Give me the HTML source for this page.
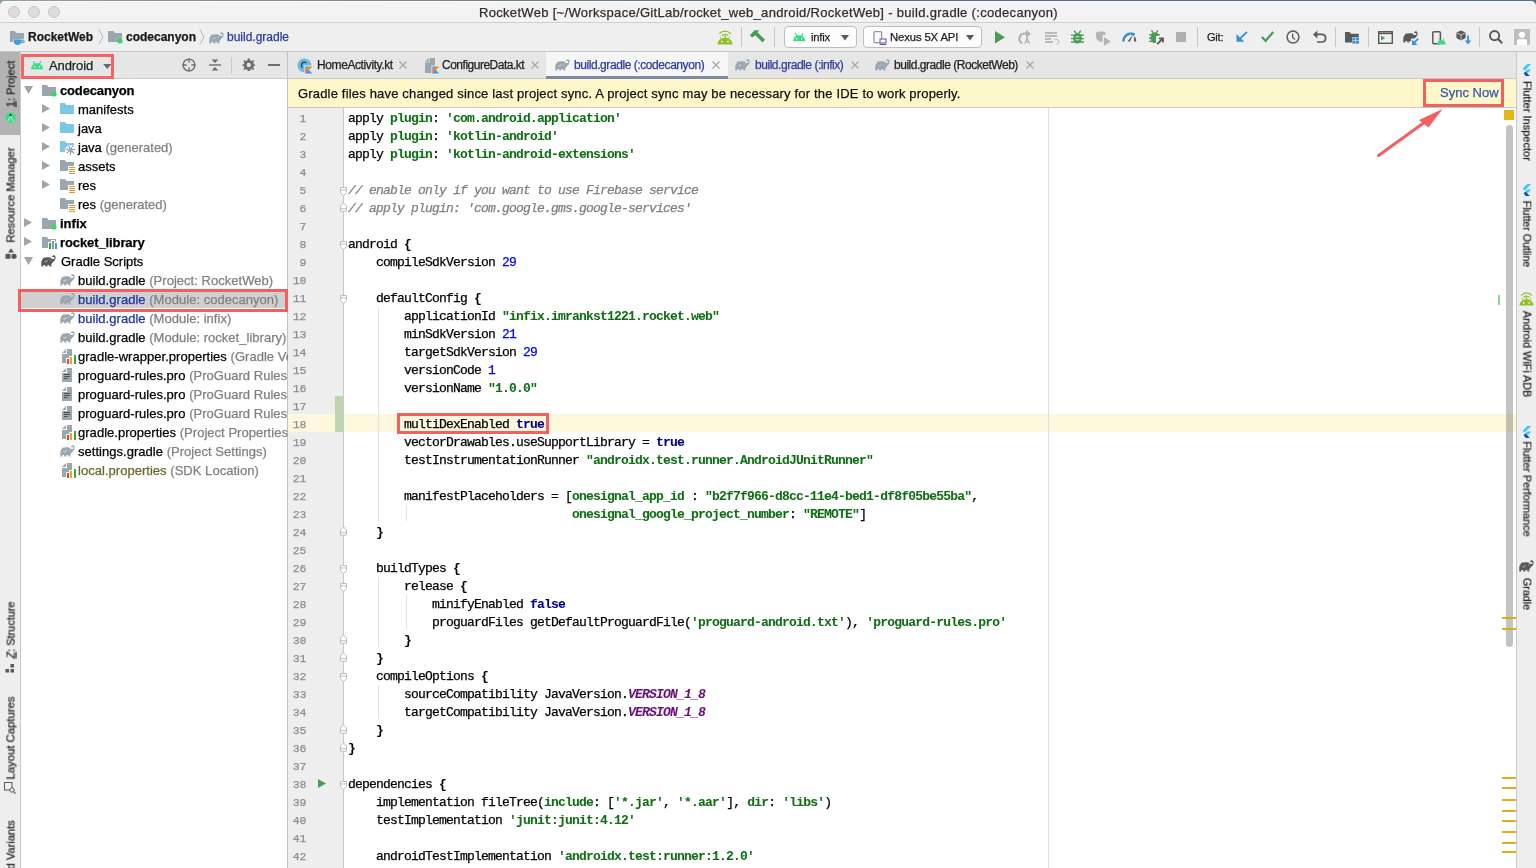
<!DOCTYPE html>
<html><head><meta charset="utf-8">
<style>
*{margin:0;padding:0;box-sizing:border-box}
html,body{width:1536px;height:868px;overflow:hidden;background:#efefef;font-family:"Liberation Sans",sans-serif;color:#000;position:relative}
.a{position:absolute;display:block}
.t{position:absolute;white-space:pre;line-height:1}
svg.a{overflow:visible}
.code{position:absolute;left:348px;top:110.44px;font-family:"Liberation Mono",monospace;font-size:13px;letter-spacing:-0.8px;line-height:18px;white-space:pre;color:#000}
.ln{position:absolute;left:280px;top:110.04px;width:26.3px;text-align:right;font-family:"Liberation Mono",monospace;font-size:11.5px;letter-spacing:-0.1px;line-height:18px;white-space:pre;color:#8c8c8c}
.code i{font-style:normal}
.code i.s{color:#0f6e14;font-weight:bold}
.code i.k{color:#000080;font-weight:bold}
.code i.n{color:#0000ff}
.code i.c{color:#808080;font-style:italic}
.code i.b{font-weight:bold}
.code i.p{color:#660e7a;font-weight:bold;font-style:italic}
.t,.code,.ln{will-change:transform;-webkit-text-stroke:0.25px currentColor}
.code i.s,.code i.k,.code i.b,.code i.p{-webkit-text-stroke:0.05px currentColor}
</style></head><body>
<div class="a" style="left:0px;top:0px;width:1536px;height:8px;background:linear-gradient(90deg,#8fa0a3,#5d7183 50%,#587090);"></div>
<div class="a" style="left:0;top:1px;width:1536px;height:22px;background:#f3f3f3;border-radius:5px 5px 0 0;border-top:1px solid #fbfbfb"></div>
<div class="a" style="left:0px;top:22px;width:1536px;height:1px;background:#cfcfcf;"></div>
<div class="a" style="left:8px;top:5.5px;width:12px;height:12px;border-radius:50%;background:#dddddd;border:0.6px solid #c9c9c9"></div>
<div class="a" style="left:28px;top:5.5px;width:12px;height:12px;border-radius:50%;background:#dddddd;border:0.6px solid #c9c9c9"></div>
<div class="a" style="left:48px;top:5.5px;width:12px;height:12px;border-radius:50%;background:#dddddd;border:0.6px solid #c9c9c9"></div>
<div class="t" style="left:479.40px;top:6.00px;font-size:13px;color:#2e2e2e;letter-spacing:0.31px;">RocketWeb [~/Workspace/GitLab/rocket_web_android/RocketWeb] - build.gradle (:codecanyon)</div>
<div class="a" style="left:0px;top:23px;width:1536px;height:28px;background:#efefef;"></div>
<div class="a" style="left:0px;top:51px;width:1536px;height:1px;background:#c8c8c8;"></div>
<svg class="a" style="left:10px;top:31px;" width="16" height="15" viewBox="0 0 16 15"><path d="M0 0H4.6L6.4 2H14V8.6H13.2V8.2H3V11H0Z" fill="#9aa7b0"/><path d="M3.8 8.6 H11.2 V10.6 C11 12.6 9.6 14 7.5 14 C5.4 14 4 12.6 3.8 10.6Z" fill="#389fd6"/><ellipse cx="12.6" cy="10.6" rx="1.7" ry="1.1" stroke="#389fd6" stroke-width="1.1" fill="none"/></svg>
<div class="t" style="left:28.30px;top:30.84px;font-size:12px;color:#1a1a1a;font-weight:bold;">RocketWeb</div>
<svg class="a" style="left:98px;top:29px;" width="6" height="16" viewBox="0 0 6 16"><path d="M0.8 0.5L5 8L0.8 15.5" stroke="#b8b8b8" stroke-width="1" fill="none"/></svg>
<svg class="a" style="left:108px;top:31px;" width="14" height="11" viewBox="0 0 14 11"><path d="M0 0H5.5L7 2H14V11H0Z" fill="#9aa7b0"/></svg>
<svg class="a" style="left:117px;top:38px;" width="6" height="6" viewBox="0 0 6 6"><circle cx="3" cy="3" r="2.6" fill="#3dd65f"/></svg>
<div class="t" style="left:126.00px;top:30.84px;font-size:12px;color:#1a1a1a;font-weight:bold;">codecanyon</div>
<svg class="a" style="left:199px;top:29px;" width="6" height="16" viewBox="0 0 6 16"><path d="M0.8 0.5L5 8L0.8 15.5" stroke="#b8b8b8" stroke-width="1" fill="none"/></svg>
<svg class="a" style="left:208.5px;top:31.5px;" width="15" height="12" viewBox="0 0 15 12"><path d="M0.3 11.4 V6.6 L2.4 2.8 C4.5 2.0 7.5 2.0 9.6 2.6 L10.2 3.6 C11.2 4.4 12.8 4.2 13.4 3.2 C13.8 2.5 13.2 1.8 12.4 1.9 C11.8 2 11.4 2.4 11.1 2.0 C10.9 1.4 11.6 0.4 12.6 0.3 C14.0 0.2 14.9 1.4 14.6 3.0 C14.3 4.8 13.2 6.2 11.9 7.2 L10.4 9.0 V11.4 H8.6 L8.2 10.0 C7.4 10.2 7.0 10.2 6.4 10.0 V11.4 H4.4 L4.1 10.0 H2.5 L2.2 11.4 Z" fill="#9aa7b0"/><path d="M3.4 6.4 L4.6 7.0 L6.6 5.6" stroke="#efefef" stroke-width="0.8" fill="none" opacity="0.8"/><path d="M9.7 4.4 V6" stroke="#efefef" stroke-width="0.6" opacity="0.6"/></svg>
<div class="t" style="left:227.00px;top:30.84px;font-size:12px;color:#283b9c;">build.gradle</div>
<svg class="a" style="left:716px;top:29px;" width="18" height="17" viewBox="0 0 18 17"><path d="M1.5 15.5 C1.8 11.5 4.8 8.8 9 8.8 C13.2 8.8 16.2 11.5 16.5 15.5 Z" fill="#8fc026"/><circle cx="6" cy="12.6" r="0.9" fill="#fff"/><circle cx="12" cy="12.6" r="0.9" fill="#fff"/><path d="M3.3 4.8 C6.5 1.2 11.5 1.2 14.7 4.8" stroke="#8fc026" stroke-width="1.3" fill="none"/><path d="M5.8 6.8 C7.6 5 10.4 5 12.2 6.8" stroke="#8fc026" stroke-width="1.3" fill="none"/><circle cx="9" cy="7.4" r="1" fill="#8fc026"/><path d="M4.3 7.6 L5 9.2 M13.7 7.6 L13 9.2" stroke="#8fc026" stroke-width="1"/></svg>
<div class="a" style="left:741px;top:27px;width:1px;height:20px;background:#c6c6c6;"></div>
<svg class="a" style="left:749px;top:29px;" width="17" height="16" viewBox="0 0 17 16"><path d="M0.8 6.2 L5.6 1.2 L10.2 1.2 L8.6 3.6 L16 10.6 L13.6 13.6 L6.4 6.2 L3.2 8.6 Z" fill="#499c54"/></svg>
<div class="a" style="left:774px;top:27px;width:1px;height:20px;background:#c6c6c6;"></div>
<div class="a" style="left:784px;top:26px;width:73px;height:22px;border:1px solid #bdbdbd;border-radius:4px;background:#fcfcfd"></div>
<div class="a" style="left:863px;top:26px;width:119px;height:22px;border:1px solid #bdbdbd;border-radius:4px;background:#fcfcfd"></div>
<svg class="a" style="left:792.9px;top:32.6px;" width="12.3" height="8.2" viewBox="0 0 12 8.2"><path d="M0 8.2 C0.1 4.9 2.5 2.3 6 2.3 C9.5 2.3 11.9 4.9 12 8.2 Z" fill="#3ddc84"/><path d="M2.5 0.5 L3.5 3 M9.5 0.5 L8.5 3" stroke="#3ddc84" stroke-width="1.2" stroke-linecap="round"/><circle cx="3.6" cy="5.7" r="0.7" fill="#fff"/><circle cx="8.5" cy="5.7" r="0.7" fill="#fff"/></svg>
<div class="t" style="left:811.00px;top:31.83px;font-size:11.3px;color:#1e1e1e;letter-spacing:-0.25px;">infix</div>
<svg class="a" style="left:841px;top:34.5px;" width="8" height="5.5" viewBox="0 0 8 5.5"><path d="M0 0H8L4 5.5Z" fill="#595959"/></svg>
<svg class="a" style="left:873px;top:31px;" width="14" height="14" viewBox="0 0 14 14"><rect x="1" y="0.6" width="7.6" height="11" rx="1" stroke="#8d9aa3" stroke-width="1.3" fill="none"/><rect x="7" y="8" width="6" height="4" fill="#fcfcfd" stroke="#7048a8" stroke-width="1"/><path d="M6.6 13.5H13.2" stroke="#7048a8" stroke-width="1"/></svg>
<div class="t" style="left:890.30px;top:31.83px;font-size:11.3px;color:#1e1e1e;letter-spacing:-0.12px;">Nexus 5X API</div>
<svg class="a" style="left:966px;top:34.5px;" width="8" height="5.5" viewBox="0 0 8 5.5"><path d="M0 0H8L4 5.5Z" fill="#595959"/></svg>
<svg class="a" style="left:994.5px;top:30.5px;" width="10" height="12.5" viewBox="0 0 10 12.5"><path d="M0 0L10 6.2L0 12.5Z" fill="#499c54"/></svg>
<svg class="a" style="left:1018px;top:30px;" width="14" height="14" viewBox="0 0 14 14"><path d="M4.2 13.2 C1.4 12 0.6 8.6 2 6 C3.2 4 5.8 3.2 8.5 3.8" stroke="#b0b0b0" stroke-width="2" fill="none"/><path d="M8 0 L13 4 L8 8 Z" fill="#b0b0b0"/><path d="M7 13.8 L9.2 7.6 L11.4 13.8 M7.8 11.6H10.6" stroke="#b0b0b0" stroke-width="1.1" fill="none"/></svg>
<svg class="a" style="left:1045px;top:31.5px;" width="15" height="13" viewBox="0 0 15 13"><path d="M0 1H12M0 4H12M0 7H6M0 10H8" stroke="#a9a9a9" stroke-width="1.6"/><path d="M9.2 8 C11 6.8 14.2 7.4 14 10 C13.8 12 12 12.4 11 12" stroke="#b8b8b8" stroke-width="1" fill="none"/></svg>
<svg class="a" style="left:1070.5px;top:30px;" width="13" height="14" viewBox="0 0 13 14"><path d="M3.2 0.6 L5 3 M9.8 0.6 L8 3" stroke="#499c54" stroke-width="1.4"/><ellipse cx="6.5" cy="8.2" rx="4.3" ry="5.4" fill="#499c54"/><path d="M0 5.2H13M0 8.6H13M0 12H13" stroke="#499c54" stroke-width="1.3"/><path d="M4.6 6.8H8.4M4.6 9.8H8.4" stroke="#efefef" stroke-width="0.9"/></svg>
<svg class="a" style="left:1096px;top:30.5px;" width="15" height="15" viewBox="0 0 15 15"><path d="M0 1.5 C2.4 0 7.2 0 9.6 1.5 V4 H6.6 V11 C3.6 11.5 0 8.8 0 5.6Z" fill="#b4b4b4"/><path d="M8 6 L15 10.5 L8 15 Z" fill="#b4b4b4"/></svg>
<svg class="a" style="left:1121.5px;top:31.5px;" width="15" height="10" viewBox="0 0 15 10"><path d="M1.4 9.5 C1.4 5 4.6 1.6 8.6 1.6" stroke="#3592d8" stroke-width="2.6" fill="none"/><path d="M8.6 1.6 C10.5 1.6 11.8 2.2 12.6 3" stroke="#3592d8" stroke-width="2.6" fill="none"/><path d="M5.5 9.5 L11 2.5 L8 9.5Z" fill="#5a5a5a"/><path d="M12.2 4 C13.6 5.2 14.2 7.2 14.2 9.5 H12Z" fill="#5a5a5a"/></svg>
<svg class="a" style="left:1149px;top:30px;" width="15" height="15" viewBox="0 0 15 15"><path d="M2.5 0.4 L4.2 2.8 M8.8 0.4 L7.2 2.8" stroke="#499c54" stroke-width="1.4"/><path d="M5.6 2.2 C8.6 2.2 9.8 4.2 9.8 6 H7 V12.8 C6.5 13 6 13 5.6 13 C2.8 13 1.6 10.5 1.6 7.5 C1.6 4.3 3 2.2 5.6 2.2Z" fill="#499c54"/><path d="M0 4.6H11M0 8H7M0 11.4H7" stroke="#499c54" stroke-width="1.3"/><path d="M8.2 14.2 L13.4 9 M10 8.4 H14 V12.4" stroke="#595959" stroke-width="1.8" fill="none"/></svg>
<div class="a" style="left:1176px;top:32px;width:10px;height:10px;background:#b0b0b0;"></div>
<div class="a" style="left:1197px;top:27px;width:1px;height:20px;background:#c6c6c6;"></div>
<div class="t" style="left:1207.30px;top:31.69px;font-size:11px;color:#1e1e1e;letter-spacing:-0.2px;">Git:</div>
<svg class="a" style="left:1236px;top:31px;" width="12" height="11" viewBox="0 0 12 11"><path d="M11 0.8 L2.6 9" stroke="#3592d8" stroke-width="1.8"/><path d="M0.5 3 V10.8 H8.3Z" fill="#3592d8"/></svg>
<svg class="a" style="left:1261px;top:31px;" width="13" height="11" viewBox="0 0 13 11"><path d="M0.8 6 L4.6 9.8 L12.2 1" stroke="#499c54" stroke-width="2.2" fill="none"/></svg>
<svg class="a" style="left:1286px;top:30px;" width="14" height="14" viewBox="0 0 14 14"><circle cx="7" cy="7" r="5.9" stroke="#5a5a5a" stroke-width="1.5" fill="none"/><path d="M6.6 3.6 V7.4 L9 9.4" stroke="#5a5a5a" stroke-width="1.3" fill="none"/></svg>
<svg class="a" style="left:1313px;top:30px;" width="14" height="13" viewBox="0 0 14 13"><path d="M3.6 4.4 H8.6 C11 4.4 12.6 6 12.6 8.2 C12.6 10.4 11 12 8.6 12 H4" stroke="#5a5a5a" stroke-width="1.7" fill="none"/><path d="M0 4.4 L4.4 0.4 V8.4Z" fill="#5a5a5a"/></svg>
<div class="a" style="left:1335px;top:27px;width:1px;height:20px;background:#c6c6c6;"></div>
<svg class="a" style="left:1344.5px;top:32px;" width="15" height="12" viewBox="0 0 15 12"><path d="M0 0H4.6L6 1.8H13.8V5H7.2V10.4H0Z" fill="#595959"/><rect x="7.4" y="5.4" width="3" height="2.8" fill="#3592d8"/><rect x="11" y="5.4" width="3" height="2.8" fill="#3592d8"/><rect x="7.4" y="8.8" width="3" height="2.8" fill="#3592d8"/><rect x="11" y="8.8" width="3" height="2.8" fill="#3592d8"/></svg>
<div class="a" style="left:1368px;top:27px;width:1px;height:20px;background:#c6c6c6;"></div>
<svg class="a" style="left:1377.5px;top:30.5px;" width="15" height="13" viewBox="0 0 15 13"><rect x="0.7" y="0.7" width="13.6" height="11.6" stroke="#595959" stroke-width="1.4" fill="none"/><path d="M0.7 2.4H14.3" stroke="#595959" stroke-width="1.6"/><path d="M3 4.4 L7.2 7 L3 9.6Z" fill="#499c54"/></svg>
<svg class="a" style="left:1403px;top:31px;" width="16" height="14" viewBox="0 0 16 14"><path d="M0.3 11.4 V6.6 L2.4 2.8 C4.5 2.0 7.5 2.0 9.6 2.6 L10.2 3.6 C11.2 4.4 12.8 4.2 13.4 3.2 C13.8 2.5 13.2 1.8 12.4 1.9 C11.8 2 11.4 2.4 11.1 2.0 C10.9 1.4 11.6 0.4 12.6 0.3 C14.0 0.2 14.9 1.4 14.6 3.0 C14.3 4.8 13.2 6.2 11.9 7.2 L10.4 9.0 V11.4 H8.6 L8.2 10.0 C7.4 10.2 7.0 10.2 6.4 10.0 V11.4 H4.4 L4.1 10.0 H2.5 L2.2 11.4 Z" fill="#5a5a5a"/><path d="M8 7.5 H16 V14 H8Z" fill="#efefef"/><path d="M15.2 7.6 L10.6 12.2" stroke="#3592d8" stroke-width="1.8"/><path d="M9 8.6V14H14.4Z" fill="#3592d8"/></svg>
<svg class="a" style="left:1431.5px;top:30.5px;" width="14" height="14" viewBox="0 0 14 14"><rect x="0.8" y="0.8" width="7.6" height="12" rx="1" stroke="#595959" stroke-width="1.5" fill="none"/><path d="M5 13.6 C5.2 10.6 7 8.8 9.4 8.8 C11.8 8.8 13.6 10.6 13.8 13.6Z" fill="#3ddc84"/><path d="M6.6 7.4L7.6 9M12.2 7.4L11.2 9" stroke="#3ddc84" stroke-width="0.9"/></svg>
<svg class="a" style="left:1455.5px;top:30px;" width="16" height="15" viewBox="0 0 16 15"><path d="M5 0.4 L9.6 2.6 V8 L5 10.4 L0.4 8 V2.6Z" fill="#595959"/><path d="M0.6 2.8 L5 5 L9.4 2.8 M5 5V10.2" stroke="#efefef" stroke-width="0.7" fill="none"/><path d="M12 5.6 V13" stroke="#3592d8" stroke-width="1.8"/><path d="M8.8 10.6 H15.2 L12 14.6Z" fill="#3592d8"/></svg>
<div class="a" style="left:1479px;top:27px;width:1px;height:20px;background:#c6c6c6;"></div>
<svg class="a" style="left:1488px;top:29px;" width="16" height="16" viewBox="0 0 16 16"><circle cx="6.6" cy="6.6" r="4.6" stroke="#595959" stroke-width="1.9" fill="none"/><path d="M10 10 L14.2 14.2" stroke="#595959" stroke-width="2.2"/></svg>
<svg class="a" style="left:1514px;top:29px;" width="16" height="16" viewBox="0 0 16 16"><rect width="16" height="16" fill="#bdbdbd"/><circle cx="8" cy="5.8" r="3.1" fill="#fff"/><path d="M3 16 V11.6 C3 10.8 3.6 10.2 4.4 10.2 H11.6 C12.4 10.2 13 10.8 13 11.6 V16Z" fill="#fff"/></svg>
<div class="a" style="left:0px;top:52px;width:20px;height:816px;background:#eeeeee;"></div>
<div class="a" style="left:20px;top:52px;width:1px;height:816px;background:#c9c9c9;"></div>
<div class="a" style="left:0px;top:52px;width:20px;height:83px;background:#b3b3b3;"></div>
<div class="t" style="left:10.7px;top:83.5px;font-size:11.0px;color:#1e1e1e;transform:translate(-50%,-50%) rotate(-90deg);"><u>1</u>: Project</div>
<svg class="a" style="left:5px;top:112px;" width="11" height="11" viewBox="0 0 11 11"><circle cx="5.5" cy="5.5" r="5.2" fill="#3ddc84"/><path d="M5.5 2 L5.5 4.6" stroke="#073042" stroke-width="1.6"/><path d="M2.6 9.6 L5.5 4 L8.4 9.6" stroke="#e8f5ec" stroke-width="0.8" fill="none"/></svg>
<div class="t" style="left:10.7px;top:195.3px;font-size:11.2px;color:#1e1e1e;transform:translate(-50%,-50%) rotate(-90deg);">Resource Manager</div>
<svg class="a" style="left:4.5px;top:247.5px;" width="12" height="12" viewBox="0 0 12 12"><path d="M6 0.3 L9 4.6 H3Z" fill="#595959"/><rect x="0.5" y="5.8" width="5" height="5" fill="#595959"/><circle cx="9" cy="8.3" r="2.6" fill="#595959"/></svg>
<div class="t" style="left:10.7px;top:629.8px;font-size:10.9px;color:#1e1e1e;transform:translate(-50%,-50%) rotate(-90deg);"><u><i>Z</i></u>: Structure</div>
<svg class="a" style="left:5px;top:663px;transform:rotate(-90deg)" width="10" height="10" viewBox="0 0 10 10"><rect x="0.5" y="0.5" width="3.5" height="3.5" fill="#595959"/><rect x="0.5" y="5.5" width="3.5" height="3.5" fill="#595959"/><rect x="5.5" y="5.5" width="3.5" height="3.5" fill="#595959"/></svg>
<div class="t" style="left:10.7px;top:737.5px;font-size:11.3px;color:#1e1e1e;transform:translate(-50%,-50%) rotate(-90deg);">Layout Captures</div>
<svg class="a" style="left:4px;top:782px;transform:rotate(-90deg)" width="12" height="12" viewBox="0 0 12 12"><rect x="4" y="0.5" width="7.5" height="7.5" stroke="#595959" stroke-width="1" fill="none"/><circle cx="4" cy="8" r="2.2" stroke="#595959" stroke-width="1" fill="#eeeeee"/><path d="M2.4 9.6 L0.4 11.6" stroke="#595959" stroke-width="1.1"/></svg>
<div class="t" style="left:10.7px;top:854px;font-size:11.1px;color:#1e1e1e;transform:translate(-50%,-50%) rotate(-90deg);">Build Variants</div>
<div class="a" style="left:21px;top:52px;width:266px;height:26px;background:#e6e6e6;"></div>
<div class="a" style="left:21px;top:78px;width:266px;height:1px;background:#c9c9c9;"></div>
<div class="a" style="left:287px;top:52px;width:1px;height:816px;background:#c2c2c2;"></div>
<svg class="a" style="left:30.9px;top:60.8px;" width="12.1" height="8.2" viewBox="0 0 12 8.2"><path d="M0 8.2 C0.1 4.9 2.5 2.3 6 2.3 C9.5 2.3 11.9 4.9 12 8.2 Z" fill="#3ddc84"/><path d="M2.5 0.5 L3.5 3 M9.5 0.5 L8.5 3" stroke="#3ddc84" stroke-width="1.2" stroke-linecap="round"/><circle cx="3.6" cy="5.7" r="0.7" fill="#fff"/><circle cx="8.5" cy="5.7" r="0.7" fill="#fff"/></svg>
<div class="t" style="left:49.20px;top:59.00px;font-size:13px;color:#1e1e1e;letter-spacing:-0.1px;">Android</div>
<svg class="a" style="left:102.5px;top:63.8px;" width="8.5" height="5" viewBox="0 0 8.5 5"><path d="M0 0H8.5L4.25 5Z" fill="#6a6a6a"/></svg>
<div class="a" style="left:21px;top:54px;width:93px;height:25px;border:3px solid #f46464"></div>
<svg class="a" style="left:182px;top:58px;" width="14" height="14" viewBox="0 0 14 14"><circle cx="7" cy="7" r="5.9" stroke="#6e6e6e" stroke-width="1.4" fill="none"/><path d="M7 0.4V4.6M7 9.4V13.6M0.4 7H4.6M9.4 7H13.6" stroke="#6e6e6e" stroke-width="1.4"/></svg>
<svg class="a" style="left:209px;top:59px;" width="12" height="12" viewBox="0 0 12 12"><path d="M0 6H12" stroke="#6e6e6e" stroke-width="1.4"/><path d="M2.5 0.5H9.5L6 4Z M2.5 11.5H9.5L6 8Z" fill="#6e6e6e"/></svg>
<div class="a" style="left:231px;top:57px;width:1px;height:17px;background:#c9c9c9;"></div>
<svg class="a" style="left:241.5px;top:57.8px;" width="13" height="13" viewBox="0 0 13 13"><path d="M6.5 0.6 L7.8 0.6 L8.2 2.4 L9.8 3.1 L11.3 2.1 L12.2 3 L11.2 4.6 L11.9 6.2 L13 6.5 V7.8 L11.9 8.1 L11.2 9.7 L12.2 11.2 L11.3 12.1 L9.8 11.1 L8.2 11.8 L7.8 13 H5.8 L5.4 11.8 L3.8 11.1 L2.3 12.1 L1.4 11.2 L2.4 9.7 L1.7 8.1 L0.4 7.8 V6.5 L1.7 6.2 L2.4 4.6 L1.4 3 L2.3 2.1 L3.8 3.1 L5.4 2.4 L5.8 0.6Z" fill="#6e6e6e"/><circle cx="6.8" cy="6.9" r="2.2" fill="#e6e6e6"/></svg>
<div class="a" style="left:268px;top:64px;width:12px;height:1.6px;background:#6e6e6e;"></div>
<div class="a" style="left:21px;top:79px;width:266px;height:789px;background:#ffffff;"></div>
<svg class="a" style="left:24px;top:85.5px;" width="9" height="8" viewBox="0 0 9 8"><path d="M0 0H9L4.5 8Z" fill="#a3a3a3"/></svg>
<svg class="a" style="left:42px;top:85.0px;" width="14" height="11" viewBox="0 0 14 11"><path d="M0 0H4.8L6.6 2H14V11H0Z" fill="#9aa7b0"/></svg>
<svg class="a" style="left:50.5px;top:91.3px;" width="6" height="6" viewBox="0 0 6 6"><circle cx="3" cy="3" r="2.6" fill="#3dd65f"/></svg>
<div class="t" style="left:60.30px;top:84.00px;font-size:13px;color:#000;font-weight:bold;letter-spacing:-0.15px;">codecanyon</div>
<svg class="a" style="left:42px;top:104.0px;" width="8" height="9" viewBox="0 0 8 9"><path d="M0 0L8 4.5L0 9Z" fill="#a3a3a3"/></svg>
<svg class="a" style="left:60px;top:103.0px;" width="14" height="11" viewBox="0 0 14 11"><path d="M0 0H4.8L6.6 2H14V11H0Z" fill="#7cc7e8"/></svg>
<div class="t" style="left:78.00px;top:103.00px;font-size:13px;color:#000;">manifests</div>
<svg class="a" style="left:42px;top:123.0px;" width="8" height="9" viewBox="0 0 8 9"><path d="M0 0L8 4.5L0 9Z" fill="#a3a3a3"/></svg>
<svg class="a" style="left:60px;top:122.0px;" width="14" height="11" viewBox="0 0 14 11"><path d="M0 0H4.8L6.6 2H14V11H0Z" fill="#7cc7e8"/></svg>
<div class="t" style="left:78.00px;top:122.00px;font-size:13px;color:#000;">java</div>
<svg class="a" style="left:42px;top:142.0px;" width="8" height="9" viewBox="0 0 8 9"><path d="M0 0L8 4.5L0 9Z" fill="#a3a3a3"/></svg>
<svg class="a" style="left:60px;top:141.0px;" width="14" height="11" viewBox="0 0 14 11"><path d="M0 0H4.8L6.6 2H14V11H0Z" fill="#7cc7e8"/></svg>
<svg class="a" style="left:65px;top:145.0px;" width="11" height="11" viewBox="0 0 11 11"><circle cx="5.5" cy="5.5" r="5.5" fill="#fff"/><g transform="translate(5.5 5.2) scale(0.85)" stroke="#87949e" stroke-width="1.3" stroke-linecap="round" fill="none"><path d="M0.6 -0.8 C0.6 -2.4 1.4 -3.6 2.6 -4.2" transform="rotate(0.0)"/><path d="M0.6 -0.8 C0.6 -2.4 1.4 -3.6 2.6 -4.2" transform="rotate(51.4)"/><path d="M0.6 -0.8 C0.6 -2.4 1.4 -3.6 2.6 -4.2" transform="rotate(102.8)"/><path d="M0.6 -0.8 C0.6 -2.4 1.4 -3.6 2.6 -4.2" transform="rotate(154.2)"/><path d="M0.6 -0.8 C0.6 -2.4 1.4 -3.6 2.6 -4.2" transform="rotate(205.6)"/><path d="M0.6 -0.8 C0.6 -2.4 1.4 -3.6 2.6 -4.2" transform="rotate(257.0)"/><path d="M0.6 -0.8 C0.6 -2.4 1.4 -3.6 2.6 -4.2" transform="rotate(308.4)"/></g></svg>
<div class="t" style="left:78.00px;top:141.00px;font-size:13px;color:#000;">java <span style="color:#808080">(generated)</span></div>
<svg class="a" style="left:42px;top:161.0px;" width="8" height="9" viewBox="0 0 8 9"><path d="M0 0L8 4.5L0 9Z" fill="#a3a3a3"/></svg>
<svg class="a" style="left:60px;top:160.0px;" width="14" height="11" viewBox="0 0 14 11"><path d="M0 0H4.8L6.6 2H14V11H0Z" fill="#9aa7b0"/></svg><div class="a" style="left:68px;top:166.0px;width:8px;height:8px;background:#fff;"></div><svg class="a" style="left:69px;top:167px;" width="6" height="8" viewBox="0 0 6 8"><path d="M0 0.5H6M0 2.5H6M0 4.5H6M0 6.5H6" stroke="#d9962b" stroke-width="1"/></svg>
<div class="t" style="left:78.00px;top:160.00px;font-size:13px;color:#000;">assets</div>
<svg class="a" style="left:42px;top:180.0px;" width="8" height="9" viewBox="0 0 8 9"><path d="M0 0L8 4.5L0 9Z" fill="#a3a3a3"/></svg>
<svg class="a" style="left:60px;top:179.0px;" width="14" height="11" viewBox="0 0 14 11"><path d="M0 0H4.8L6.6 2H14V11H0Z" fill="#9aa7b0"/></svg><div class="a" style="left:68px;top:185.0px;width:8px;height:8px;background:#fff;"></div><svg class="a" style="left:69px;top:186px;" width="6" height="8" viewBox="0 0 6 8"><path d="M0 0.5H6M0 2.5H6M0 4.5H6M0 6.5H6" stroke="#d9962b" stroke-width="1"/></svg>
<div class="t" style="left:78.00px;top:179.00px;font-size:13px;color:#000;">res</div>
<svg class="a" style="left:60px;top:198.0px;" width="14" height="11" viewBox="0 0 14 11"><path d="M0 0H4.8L6.6 2H14V11H0Z" fill="#9aa7b0"/></svg><div class="a" style="left:68px;top:204.0px;width:8px;height:8px;background:#fff;"></div><svg class="a" style="left:69px;top:205px;" width="6" height="8" viewBox="0 0 6 8"><path d="M0 0.5H6M0 2.5H6M0 4.5H6M0 6.5H6" stroke="#d9962b" stroke-width="1"/></svg>
<div class="t" style="left:78.00px;top:198.00px;font-size:13px;color:#000;">res <span style="color:#808080">(generated)</span></div>
<svg class="a" style="left:24px;top:218.0px;" width="8" height="9" viewBox="0 0 8 9"><path d="M0 0L8 4.5L0 9Z" fill="#a3a3a3"/></svg>
<svg class="a" style="left:42px;top:218.0px;" width="14" height="11" viewBox="0 0 14 11"><path d="M0 0H4.8L6.6 2H14V11H0Z" fill="#9aa7b0"/></svg>
<svg class="a" style="left:50.5px;top:224.3px;" width="6" height="6" viewBox="0 0 6 6"><circle cx="3" cy="3" r="2.6" fill="#3dd65f"/></svg>
<div class="t" style="left:60.30px;top:217.00px;font-size:13px;color:#000;font-weight:bold;">infix</div>
<svg class="a" style="left:24px;top:237.0px;" width="8" height="9" viewBox="0 0 8 9"><path d="M0 0L8 4.5L0 9Z" fill="#a3a3a3"/></svg>
<svg class="a" style="left:42px;top:237.0px;" width="14" height="11" viewBox="0 0 14 11"><path d="M0 0H4.8L6.6 2H14V11H0Z" fill="#9aa7b0"/></svg>
<div class="a" style="left:48px;top:242px;width:10px;height:9px;background:#fff;"></div>
<div class="a" style="left:51px;top:240px;width:4px;height:2px;background:#fff;"></div>
<div class="a" style="left:55px;top:242px;width:1px;height:1px;background:#fff;"></div>
<div class="a" style="left:49px;top:243px;width:2px;height:6px;background:#3e9f3a;"></div>
<div class="a" style="left:52px;top:241px;width:2px;height:8px;background:#8a97a1;"></div>
<div class="a" style="left:55px;top:243px;width:2px;height:6px;background:#2f9ce0;"></div>
<div class="t" style="left:60.30px;top:236.00px;font-size:13px;color:#000;font-weight:bold;letter-spacing:-0.1px;">rocket_library</div>
<svg class="a" style="left:24px;top:256.5px;" width="9" height="8" viewBox="0 0 9 8"><path d="M0 0H9L4.5 8Z" fill="#a3a3a3"/></svg>
<svg class="a" style="left:41.4px;top:255.2px;" width="15" height="12" viewBox="0 0 15 12"><path d="M0.3 11.4 V6.6 L2.4 2.8 C4.5 2.0 7.5 2.0 9.6 2.6 L10.2 3.6 C11.2 4.4 12.8 4.2 13.4 3.2 C13.8 2.5 13.2 1.8 12.4 1.9 C11.8 2 11.4 2.4 11.1 2.0 C10.9 1.4 11.6 0.4 12.6 0.3 C14.0 0.2 14.9 1.4 14.6 3.0 C14.3 4.8 13.2 6.2 11.9 7.2 L10.4 9.0 V11.4 H8.6 L8.2 10.0 C7.4 10.2 7.0 10.2 6.4 10.0 V11.4 H4.4 L4.1 10.0 H2.5 L2.2 11.4 Z" fill="#5a5a5a"/><path d="M3.4 6.4 L4.6 7.0 L6.6 5.6" stroke="#fff" stroke-width="0.8" fill="none" opacity="0.8"/><path d="M9.7 4.4 V6" stroke="#fff" stroke-width="0.6" opacity="0.6"/></svg>
<div class="t" style="left:60.50px;top:255.00px;font-size:13px;color:#000;">Gradle Scripts</div>
<div class="a" style="left:21px;top:291.5px;width:266px;height:16px;background:#d0d0d0;"></div>
<svg class="a" style="left:59.7px;top:273.5px;" width="15" height="12" viewBox="0 0 15 12"><path d="M0.3 11.4 V6.6 L2.4 2.8 C4.5 2.0 7.5 2.0 9.6 2.6 L10.2 3.6 C11.2 4.4 12.8 4.2 13.4 3.2 C13.8 2.5 13.2 1.8 12.4 1.9 C11.8 2 11.4 2.4 11.1 2.0 C10.9 1.4 11.6 0.4 12.6 0.3 C14.0 0.2 14.9 1.4 14.6 3.0 C14.3 4.8 13.2 6.2 11.9 7.2 L10.4 9.0 V11.4 H8.6 L8.2 10.0 C7.4 10.2 7.0 10.2 6.4 10.0 V11.4 H4.4 L4.1 10.0 H2.5 L2.2 11.4 Z" fill="#9aa7b0"/><path d="M3.4 6.4 L4.6 7.0 L6.6 5.6" stroke="#fff" stroke-width="0.8" fill="none" opacity="0.8"/><path d="M9.7 4.4 V6" stroke="#fff" stroke-width="0.6" opacity="0.6"/></svg>
<div class="t" style="left:78.00px;top:274.00px;font-size:13px;color:#000;letter-spacing:0.03px;">build.gradle <span style="color:#808080">(Project: RocketWeb)</span></div>
<svg class="a" style="left:59.7px;top:292.5px;" width="15" height="12" viewBox="0 0 15 12"><path d="M0.3 11.4 V6.6 L2.4 2.8 C4.5 2.0 7.5 2.0 9.6 2.6 L10.2 3.6 C11.2 4.4 12.8 4.2 13.4 3.2 C13.8 2.5 13.2 1.8 12.4 1.9 C11.8 2 11.4 2.4 11.1 2.0 C10.9 1.4 11.6 0.4 12.6 0.3 C14.0 0.2 14.9 1.4 14.6 3.0 C14.3 4.8 13.2 6.2 11.9 7.2 L10.4 9.0 V11.4 H8.6 L8.2 10.0 C7.4 10.2 7.0 10.2 6.4 10.0 V11.4 H4.4 L4.1 10.0 H2.5 L2.2 11.4 Z" fill="#9aa7b0"/><path d="M3.4 6.4 L4.6 7.0 L6.6 5.6" stroke="#d0d0d0" stroke-width="0.8" fill="none" opacity="0.8"/><path d="M9.7 4.4 V6" stroke="#d0d0d0" stroke-width="0.6" opacity="0.6"/></svg>
<div class="t" style="left:78.00px;top:293.00px;font-size:13px;color:#000;letter-spacing:0.03px;"><span style="color:#1d33a3">build.gradle</span> <span style="color:#808080">(Module: codecanyon)</span></div>
<svg class="a" style="left:59.7px;top:311.5px;" width="15" height="12" viewBox="0 0 15 12"><path d="M0.3 11.4 V6.6 L2.4 2.8 C4.5 2.0 7.5 2.0 9.6 2.6 L10.2 3.6 C11.2 4.4 12.8 4.2 13.4 3.2 C13.8 2.5 13.2 1.8 12.4 1.9 C11.8 2 11.4 2.4 11.1 2.0 C10.9 1.4 11.6 0.4 12.6 0.3 C14.0 0.2 14.9 1.4 14.6 3.0 C14.3 4.8 13.2 6.2 11.9 7.2 L10.4 9.0 V11.4 H8.6 L8.2 10.0 C7.4 10.2 7.0 10.2 6.4 10.0 V11.4 H4.4 L4.1 10.0 H2.5 L2.2 11.4 Z" fill="#9aa7b0"/><path d="M3.4 6.4 L4.6 7.0 L6.6 5.6" stroke="#fff" stroke-width="0.8" fill="none" opacity="0.8"/><path d="M9.7 4.4 V6" stroke="#fff" stroke-width="0.6" opacity="0.6"/></svg>
<div class="t" style="left:78.00px;top:312.00px;font-size:13px;color:#000;letter-spacing:0.03px;"><span style="color:#1d33a3">build.gradle</span> <span style="color:#808080">(Module: infix)</span></div>
<svg class="a" style="left:59.7px;top:330.5px;" width="15" height="12" viewBox="0 0 15 12"><path d="M0.3 11.4 V6.6 L2.4 2.8 C4.5 2.0 7.5 2.0 9.6 2.6 L10.2 3.6 C11.2 4.4 12.8 4.2 13.4 3.2 C13.8 2.5 13.2 1.8 12.4 1.9 C11.8 2 11.4 2.4 11.1 2.0 C10.9 1.4 11.6 0.4 12.6 0.3 C14.0 0.2 14.9 1.4 14.6 3.0 C14.3 4.8 13.2 6.2 11.9 7.2 L10.4 9.0 V11.4 H8.6 L8.2 10.0 C7.4 10.2 7.0 10.2 6.4 10.0 V11.4 H4.4 L4.1 10.0 H2.5 L2.2 11.4 Z" fill="#9aa7b0"/><path d="M3.4 6.4 L4.6 7.0 L6.6 5.6" stroke="#fff" stroke-width="0.8" fill="none" opacity="0.8"/><path d="M9.7 4.4 V6" stroke="#fff" stroke-width="0.6" opacity="0.6"/></svg>
<div class="t" style="left:78.00px;top:331.00px;font-size:13px;color:#000;letter-spacing:0.03px;">build.gradle <span style="color:#808080">(Module: rocket_library)</span></div>
<svg class="a" style="left:62px;top:349px;" width="10" height="14" viewBox="0 0 10 14"><path d="M0 4 L4 0 V4Z" fill="#9aa7b0"/><path d="M5 0 H10 V14 H0 V5 H5Z" fill="#9aa7b0"/></svg><svg class="a" style="left:66px;top:354px;" width="11" height="10" viewBox="0 0 11 10"><path d="M0 4 H3.2 V2 H6.6 V0 H11 V10 H0Z" fill="#fff"/></svg><div class="a" style="left:67px;top:359px;width:2.2px;height:5px;background:#e8490f;"></div><div class="a" style="left:70.2px;top:357px;width:2.2px;height:7px;background:#f0a030;"></div><div class="a" style="left:73.6px;top:355px;width:2.2px;height:9px;background:#3ea33d;"></div>
<div class="t" style="left:78.00px;top:350.00px;font-size:13px;color:#000;letter-spacing:0.03px;">gradle-wrapper.properties <span style="color:#808080">(Gradle Version)</span></div>
<svg class="a" style="left:62px;top:368px;" width="10" height="14" viewBox="0 0 10 14"><path d="M0 4 L4 0 V4Z" fill="#9aa7b0"/><path d="M5 0 H10 V14 H0 V5 H5Z" fill="#9aa7b0"/></svg><svg class="a" style="left:64px;top:374px;" width="6" height="5" viewBox="0 0 6 5"><path d="M0 0.5H6M0 2.5H6M0 4.5H3.6" stroke="#454545" stroke-width="0.9"/></svg>
<div class="t" style="left:78.00px;top:369.00px;font-size:13px;color:#000;letter-spacing:0.03px;">proguard-rules.pro <span style="color:#808080">(ProGuard Rules for codecanyon)</span></div>
<svg class="a" style="left:62px;top:387px;" width="10" height="14" viewBox="0 0 10 14"><path d="M0 4 L4 0 V4Z" fill="#9aa7b0"/><path d="M5 0 H10 V14 H0 V5 H5Z" fill="#9aa7b0"/></svg><svg class="a" style="left:64px;top:393px;" width="6" height="5" viewBox="0 0 6 5"><path d="M0 0.5H6M0 2.5H6M0 4.5H3.6" stroke="#454545" stroke-width="0.9"/></svg>
<div class="t" style="left:78.00px;top:388.00px;font-size:13px;color:#000;letter-spacing:0.03px;">proguard-rules.pro <span style="color:#808080">(ProGuard Rules for infix)</span></div>
<svg class="a" style="left:62px;top:406px;" width="10" height="14" viewBox="0 0 10 14"><path d="M0 4 L4 0 V4Z" fill="#9aa7b0"/><path d="M5 0 H10 V14 H0 V5 H5Z" fill="#9aa7b0"/></svg><svg class="a" style="left:64px;top:412px;" width="6" height="5" viewBox="0 0 6 5"><path d="M0 0.5H6M0 2.5H6M0 4.5H3.6" stroke="#454545" stroke-width="0.9"/></svg>
<div class="t" style="left:78.00px;top:407.00px;font-size:13px;color:#000;letter-spacing:0.03px;">proguard-rules.pro <span style="color:#808080">(ProGuard Rules for rocket_library)</span></div>
<svg class="a" style="left:62px;top:425px;" width="10" height="14" viewBox="0 0 10 14"><path d="M0 4 L4 0 V4Z" fill="#9aa7b0"/><path d="M5 0 H10 V14 H0 V5 H5Z" fill="#9aa7b0"/></svg><svg class="a" style="left:66px;top:430px;" width="11" height="10" viewBox="0 0 11 10"><path d="M0 4 H3.2 V2 H6.6 V0 H11 V10 H0Z" fill="#fff"/></svg><div class="a" style="left:67px;top:435px;width:2.2px;height:5px;background:#e8490f;"></div><div class="a" style="left:70.2px;top:433px;width:2.2px;height:7px;background:#f0a030;"></div><div class="a" style="left:73.6px;top:431px;width:2.2px;height:9px;background:#3ea33d;"></div>
<div class="t" style="left:78.00px;top:426.00px;font-size:13px;color:#000;letter-spacing:0.03px;">gradle.properties <span style="color:#808080">(Project Properties)</span></div>
<svg class="a" style="left:59.7px;top:444.5px;" width="15" height="12" viewBox="0 0 15 12"><path d="M0.3 11.4 V6.6 L2.4 2.8 C4.5 2.0 7.5 2.0 9.6 2.6 L10.2 3.6 C11.2 4.4 12.8 4.2 13.4 3.2 C13.8 2.5 13.2 1.8 12.4 1.9 C11.8 2 11.4 2.4 11.1 2.0 C10.9 1.4 11.6 0.4 12.6 0.3 C14.0 0.2 14.9 1.4 14.6 3.0 C14.3 4.8 13.2 6.2 11.9 7.2 L10.4 9.0 V11.4 H8.6 L8.2 10.0 C7.4 10.2 7.0 10.2 6.4 10.0 V11.4 H4.4 L4.1 10.0 H2.5 L2.2 11.4 Z" fill="#9aa7b0"/><path d="M3.4 6.4 L4.6 7.0 L6.6 5.6" stroke="#fff" stroke-width="0.8" fill="none" opacity="0.8"/><path d="M9.7 4.4 V6" stroke="#fff" stroke-width="0.6" opacity="0.6"/></svg>
<div class="t" style="left:78.00px;top:445.00px;font-size:13px;color:#000;letter-spacing:0.03px;">settings.gradle <span style="color:#808080">(Project Settings)</span></div>
<svg class="a" style="left:62px;top:463px;" width="10" height="14" viewBox="0 0 10 14"><path d="M0 4 L4 0 V4Z" fill="#9aa7b0"/><path d="M5 0 H10 V14 H0 V5 H5Z" fill="#9aa7b0"/></svg><svg class="a" style="left:66px;top:468px;" width="11" height="10" viewBox="0 0 11 10"><path d="M0 4 H3.2 V2 H6.6 V0 H11 V10 H0Z" fill="#fff"/></svg><div class="a" style="left:67px;top:473px;width:2.2px;height:5px;background:#e8490f;"></div><div class="a" style="left:70.2px;top:471px;width:2.2px;height:7px;background:#f0a030;"></div><div class="a" style="left:73.6px;top:469px;width:2.2px;height:9px;background:#3ea33d;"></div>
<div class="t" style="left:78.00px;top:464.00px;font-size:13px;color:#000;letter-spacing:0.03px;"><span style="color:#6c6a2c">local.properties</span> <span style="color:#808080">(SDK Location)</span></div>
<div class="a" style="left:288px;top:52px;width:1228px;height:26px;background:#e6e6e6;"></div>
<div class="a" style="left:288px;top:78px;width:1228px;height:1px;background:#c6c6c6;"></div>
<div class="a" style="left:546px;top:52px;width:182px;height:26px;background:#f6f6f7;"></div>
<div class="a" style="left:546px;top:76px;width:182px;height:3px;background:#7b8aab;"></div>
<svg class="a" style="left:296.5px;top:57.5px;" width="17" height="17" viewBox="0 0 17 17"><circle cx="7.4" cy="7.4" r="7" fill="#6cbadf"/><rect x="7.4" y="7.4" width="10" height="10" fill="#e6e6e6"/><path d="M9.4 5 C8.8 4.4 8.1 4.1 7.3 4.1 C5.6 4.1 4.4 5.5 4.4 7.2 C4.4 8.2 4.9 9.1 5.6 9.6" stroke="#2a3942" stroke-width="1.2" fill="none"/><g transform="translate(8.4 8.4)"><path d="M0 0H3.5L0 3.5Z" fill="#2f9df0"/><path d="M3.5 0H7L0 7V3.5Z" fill="#f88909"/><path d="M0 7L3.5 3.5L7 7Z" fill="#2f9df0"/><path d="M0 7V4.6L1.6 3 L3 4.2Z" fill="#c757bc" opacity="0.8"/></g></svg>
<div class="t" style="left:316.50px;top:59.44px;font-size:12px;color:#1e1e1e;letter-spacing:-0.4px;">HomeActivity.kt</div>
<svg class="a" style="left:399.0px;top:61.0px;" width="8" height="8" viewBox="0 0 8 8"><path d="M0.5 0.5L7.5 7.5M7.5 0.5L0.5 7.5" stroke="#a3a3a3" stroke-width="1.1"/></svg>
<svg class="a" style="left:424.5px;top:57.5px;" width="16" height="17" viewBox="0 0 16 17"><path d="M0 3.8 L3.8 0 V3.8Z" fill="#9aa7b0"/><path d="M4.6 0 H10 V7.4 H6.4 V15 H0 V4.6 H4.6Z" fill="#9aa7b0"/><g transform="translate(7.4 8.4)"><path d="M0 0H3.5L0 3.5Z" fill="#2f9df0"/><path d="M3.5 0H7L0 7V3.5Z" fill="#f88909"/><path d="M0 7L3.5 3.5L7 7Z" fill="#2f9df0"/><path d="M0 7V4.6L1.6 3 L3 4.2Z" fill="#c757bc" opacity="0.8"/></g></svg>
<div class="t" style="left:442.20px;top:59.44px;font-size:12px;color:#1e1e1e;letter-spacing:-0.49px;">ConfigureData.kt</div>
<svg class="a" style="left:531.0px;top:61.0px;" width="8" height="8" viewBox="0 0 8 8"><path d="M0.5 0.5L7.5 7.5M7.5 0.5L0.5 7.5" stroke="#a3a3a3" stroke-width="1.1"/></svg>
<svg class="a" style="left:554.5px;top:58.8px;" width="15" height="12" viewBox="0 0 15 12"><path d="M0.3 11.4 V6.6 L2.4 2.8 C4.5 2.0 7.5 2.0 9.6 2.6 L10.2 3.6 C11.2 4.4 12.8 4.2 13.4 3.2 C13.8 2.5 13.2 1.8 12.4 1.9 C11.8 2 11.4 2.4 11.1 2.0 C10.9 1.4 11.6 0.4 12.6 0.3 C14.0 0.2 14.9 1.4 14.6 3.0 C14.3 4.8 13.2 6.2 11.9 7.2 L10.4 9.0 V11.4 H8.6 L8.2 10.0 C7.4 10.2 7.0 10.2 6.4 10.0 V11.4 H4.4 L4.1 10.0 H2.5 L2.2 11.4 Z" fill="#9aa7b0"/><path d="M3.4 6.4 L4.6 7.0 L6.6 5.6" stroke="#f6f6f7" stroke-width="0.8" fill="none" opacity="0.8"/><path d="M9.7 4.4 V6" stroke="#f6f6f7" stroke-width="0.6" opacity="0.6"/></svg>
<div class="t" style="left:574.40px;top:59.44px;font-size:12px;color:#2c3b9e;letter-spacing:-0.43px;">build.gradle (:codecanyon)</div>
<svg class="a" style="left:712.0px;top:61.0px;" width="8" height="8" viewBox="0 0 8 8"><path d="M0.5 0.5L7.5 7.5M7.5 0.5L0.5 7.5" stroke="#a3a3a3" stroke-width="1.1"/></svg>
<svg class="a" style="left:735px;top:58.8px;" width="15" height="12" viewBox="0 0 15 12"><path d="M0.3 11.4 V6.6 L2.4 2.8 C4.5 2.0 7.5 2.0 9.6 2.6 L10.2 3.6 C11.2 4.4 12.8 4.2 13.4 3.2 C13.8 2.5 13.2 1.8 12.4 1.9 C11.8 2 11.4 2.4 11.1 2.0 C10.9 1.4 11.6 0.4 12.6 0.3 C14.0 0.2 14.9 1.4 14.6 3.0 C14.3 4.8 13.2 6.2 11.9 7.2 L10.4 9.0 V11.4 H8.6 L8.2 10.0 C7.4 10.2 7.0 10.2 6.4 10.0 V11.4 H4.4 L4.1 10.0 H2.5 L2.2 11.4 Z" fill="#9aa7b0"/><path d="M3.4 6.4 L4.6 7.0 L6.6 5.6" stroke="#e6e6e6" stroke-width="0.8" fill="none" opacity="0.8"/><path d="M9.7 4.4 V6" stroke="#e6e6e6" stroke-width="0.6" opacity="0.6"/></svg>
<div class="t" style="left:755.20px;top:59.44px;font-size:12px;color:#2c3b9e;letter-spacing:-0.46px;">build.gradle (:infix)</div>
<svg class="a" style="left:851.0px;top:61.0px;" width="8" height="8" viewBox="0 0 8 8"><path d="M0.5 0.5L7.5 7.5M7.5 0.5L0.5 7.5" stroke="#a3a3a3" stroke-width="1.1"/></svg>
<svg class="a" style="left:874.5px;top:58.8px;" width="15" height="12" viewBox="0 0 15 12"><path d="M0.3 11.4 V6.6 L2.4 2.8 C4.5 2.0 7.5 2.0 9.6 2.6 L10.2 3.6 C11.2 4.4 12.8 4.2 13.4 3.2 C13.8 2.5 13.2 1.8 12.4 1.9 C11.8 2 11.4 2.4 11.1 2.0 C10.9 1.4 11.6 0.4 12.6 0.3 C14.0 0.2 14.9 1.4 14.6 3.0 C14.3 4.8 13.2 6.2 11.9 7.2 L10.4 9.0 V11.4 H8.6 L8.2 10.0 C7.4 10.2 7.0 10.2 6.4 10.0 V11.4 H4.4 L4.1 10.0 H2.5 L2.2 11.4 Z" fill="#9aa7b0"/><path d="M3.4 6.4 L4.6 7.0 L6.6 5.6" stroke="#e6e6e6" stroke-width="0.8" fill="none" opacity="0.8"/><path d="M9.7 4.4 V6" stroke="#e6e6e6" stroke-width="0.6" opacity="0.6"/></svg>
<div class="t" style="left:894.00px;top:59.44px;font-size:12px;color:#1e1e1e;letter-spacing:-0.47px;">build.gradle (RocketWeb)</div>
<svg class="a" style="left:1026.0px;top:61.0px;" width="8" height="8" viewBox="0 0 8 8"><path d="M0.5 0.5L7.5 7.5M7.5 0.5L0.5 7.5" stroke="#a3a3a3" stroke-width="1.1"/></svg>
<div class="a" style="left:288px;top:79px;width:1228px;height:28px;background:#fef7c9;"></div>
<div class="a" style="left:288px;top:107px;width:1228px;height:1px;background:#c6c6c6;"></div>
<div class="t" style="left:298.10px;top:86.70px;font-size:13px;color:#111;letter-spacing:0.176px;">Gradle files have changed since last project sync. A project sync may be necessary for the IDE to work properly.</div>
<div class="t" style="left:1440.00px;top:85.70px;font-size:13px;color:#3557b3;">Sync Now</div>
<div class="a" style="left:288px;top:108px;width:55px;height:760px;background:#eeeeee;"></div>
<div class="a" style="left:344px;top:108px;width:1172px;height:760px;background:#ffffff;"></div>
<div class="a" style="left:288px;top:414px;width:55px;height:18px;background:#fdf8dd;"></div>
<div class="a" style="left:344px;top:414px;width:1172px;height:18px;background:#fdf8dd;"></div>
<div class="a" style="left:335px;top:396px;width:8px;height:36px;background:#bdd6b0;"></div>
<div class="a" style="left:343px;top:108px;width:1px;height:760px;background:#c8c8c8;"></div>
<div class="a" style="left:1048px;top:108px;width:1px;height:760px;background:#dfdfdf;"></div>
<div class="a" style="left:378px;top:307px;width:1px;height:214px;background:#e2e2e2;"></div>
<div class="a" style="left:406px;top:505px;width:1px;height:16px;background:#e2e2e2;"></div>
<div class="a" style="left:378px;top:577px;width:1px;height:70px;background:#e2e2e2;"></div>
<div class="a" style="left:406px;top:595px;width:1px;height:34px;background:#e2e2e2;"></div>
<div class="a" style="left:378px;top:685px;width:1px;height:34px;background:#e2e2e2;"></div>
<svg class="a" style="left:340px;top:187px;" width="7" height="10" viewBox="0 0 7 10"><path d="M0.5 0.5 H6.5 V5.6 L3.5 8.8 L0.5 5.6Z" fill="#fff" stroke="#bdbdbd" stroke-width="1"/><path d="M1 3H6" stroke="#bdbdbd" stroke-width="1"/></svg>
<svg class="a" style="left:340px;top:241px;" width="7" height="10" viewBox="0 0 7 10"><path d="M0.5 0.5 H6.5 V5.6 L3.5 8.8 L0.5 5.6Z" fill="#fff" stroke="#bdbdbd" stroke-width="1"/><path d="M1 3H6" stroke="#bdbdbd" stroke-width="1"/></svg>
<svg class="a" style="left:340px;top:295px;" width="7" height="10" viewBox="0 0 7 10"><path d="M0.5 0.5 H6.5 V5.6 L3.5 8.8 L0.5 5.6Z" fill="#fff" stroke="#bdbdbd" stroke-width="1"/><path d="M1 3H6" stroke="#bdbdbd" stroke-width="1"/></svg>
<svg class="a" style="left:340px;top:565px;" width="7" height="10" viewBox="0 0 7 10"><path d="M0.5 0.5 H6.5 V5.6 L3.5 8.8 L0.5 5.6Z" fill="#fff" stroke="#bdbdbd" stroke-width="1"/><path d="M1 3H6" stroke="#bdbdbd" stroke-width="1"/></svg>
<svg class="a" style="left:340px;top:583px;" width="7" height="10" viewBox="0 0 7 10"><path d="M0.5 0.5 H6.5 V5.6 L3.5 8.8 L0.5 5.6Z" fill="#fff" stroke="#bdbdbd" stroke-width="1"/><path d="M1 3H6" stroke="#bdbdbd" stroke-width="1"/></svg>
<svg class="a" style="left:340px;top:673px;" width="7" height="10" viewBox="0 0 7 10"><path d="M0.5 0.5 H6.5 V5.6 L3.5 8.8 L0.5 5.6Z" fill="#fff" stroke="#bdbdbd" stroke-width="1"/><path d="M1 3H6" stroke="#bdbdbd" stroke-width="1"/></svg>
<svg class="a" style="left:340px;top:781px;" width="7" height="10" viewBox="0 0 7 10"><path d="M0.5 0.5 H6.5 V5.6 L3.5 8.8 L0.5 5.6Z" fill="#fff" stroke="#bdbdbd" stroke-width="1"/><path d="M1 3H6" stroke="#bdbdbd" stroke-width="1"/></svg>
<svg class="a" style="left:340px;top:202px;" width="7" height="10" viewBox="0 0 7 10"><path d="M0.5 9.2 H6.5 V4.1 L3.5 0.9 L0.5 4.1Z" fill="#fff" stroke="#bdbdbd" stroke-width="1"/><path d="M1 6.7H6" stroke="#bdbdbd" stroke-width="1"/></svg>
<svg class="a" style="left:340px;top:526px;" width="7" height="10" viewBox="0 0 7 10"><path d="M0.5 9.2 H6.5 V4.1 L3.5 0.9 L0.5 4.1Z" fill="#fff" stroke="#bdbdbd" stroke-width="1"/><path d="M1 6.7H6" stroke="#bdbdbd" stroke-width="1"/></svg>
<svg class="a" style="left:340px;top:634px;" width="7" height="10" viewBox="0 0 7 10"><path d="M0.5 9.2 H6.5 V4.1 L3.5 0.9 L0.5 4.1Z" fill="#fff" stroke="#bdbdbd" stroke-width="1"/><path d="M1 6.7H6" stroke="#bdbdbd" stroke-width="1"/></svg>
<svg class="a" style="left:340px;top:652px;" width="7" height="10" viewBox="0 0 7 10"><path d="M0.5 9.2 H6.5 V4.1 L3.5 0.9 L0.5 4.1Z" fill="#fff" stroke="#bdbdbd" stroke-width="1"/><path d="M1 6.7H6" stroke="#bdbdbd" stroke-width="1"/></svg>
<svg class="a" style="left:340px;top:724px;" width="7" height="10" viewBox="0 0 7 10"><path d="M0.5 9.2 H6.5 V4.1 L3.5 0.9 L0.5 4.1Z" fill="#fff" stroke="#bdbdbd" stroke-width="1"/><path d="M1 6.7H6" stroke="#bdbdbd" stroke-width="1"/></svg>
<svg class="a" style="left:340px;top:742px;" width="7" height="10" viewBox="0 0 7 10"><path d="M0.5 9.2 H6.5 V4.1 L3.5 0.9 L0.5 4.1Z" fill="#fff" stroke="#bdbdbd" stroke-width="1"/><path d="M1 6.7H6" stroke="#bdbdbd" stroke-width="1"/></svg>
<svg class="a" style="left:317.5px;top:778.5px;" width="8" height="9" viewBox="0 0 8 9"><path d="M0 0L8 4.5L0 9Z" fill="#499c54"/></svg>
<div class="code">apply <i class="s">plugin</i>: <i class="s">'com.android.application'</i>
apply <i class="s">plugin</i>: <i class="s">'kotlin-android'</i>
apply <i class="s">plugin</i>: <i class="s">'kotlin-android-extensions'</i>

<i class="c">// enable only if you want to use Firebase service</i>
<i class="c">// apply plugin: 'com.google.gms.google-services'</i>

android <i class="b">{</i>
    compileSdkVersion <i class="n">29</i>

    defaultConfig <i class="b">{</i>
        applicationId <i class="s">"infix.imrankst1221.rocket.web"</i>
        minSdkVersion <i class="n">21</i>
        targetSdkVersion <i class="n">29</i>
        versionCode <i class="n">1</i>
        versionName <i class="s">"1.0.0"</i>

        multiDexEnabled <i class="k">true</i>
        vectorDrawables.useSupportLibrary = <i class="k">true</i>
        testInstrumentationRunner <i class="s">"androidx.test.runner.AndroidJUnitRunner"</i>

        manifestPlaceholders = [<i class="s">onesignal_app_id</i> : <i class="s">"b2f7f966-d8cc-11e4-bed1-df8f05be55ba"</i>,
                                <i class="s">onesignal_google_project_number</i>: <i class="s">"REMOTE"</i>]
    <i class="b">}</i>

    buildTypes <i class="b">{</i>
        release <i class="b">{</i>
            minifyEnabled <i class="k">false</i>
            proguardFiles getDefaultProguardFile(<i class="s">'proguard-android.txt'</i>), <i class="s">'proguard-rules.pro'</i>
        <i class="b">}</i>
    <i class="b">}</i>
    compileOptions <i class="b">{</i>
        sourceCompatibility JavaVersion.<i class="p">VERSION_1_8</i>
        targetCompatibility JavaVersion.<i class="p">VERSION_1_8</i>
    <i class="b">}</i>
<i class="b">}</i>

dependencies <i class="b">{</i>
    implementation fileTree(<i class="s">include</i>: [<i class="s">'*.jar'</i>, <i class="s">'*.aar'</i>], <i class="s">dir</i>: <i class="s">'libs'</i>)
    testImplementation <i class="s">'junit:junit:4.12'</i>

    androidTestImplementation <i class="s">'androidx.test:runner:1.2.0'</i></div>
<div class="ln">1
2
3
4
5
6
7
8
9
10
11
12
13
14
15
16
17
18
19
20
21
22
23
24
25
26
27
28
29
30
31
32
33
34
35
36
37
38
39
40
41
42</div>

<div class="a" style="left:1504px;top:110px;width:10px;height:10px;background:#e3b713;"></div>
<div class="a" style="left:1505.5px;top:125px;width:7.5px;height:522px;border-radius:4px;background:rgba(0,0,0,0.235)"></div>
<div class="a" style="left:1502px;top:617px;width:14px;height:2px;background:#e0ae12;"></div>
<div class="a" style="left:1502px;top:628px;width:14px;height:2px;background:#e0ae12;"></div>
<div class="a" style="left:1502px;top:777px;width:14px;height:2px;background:#e0ae12;"></div>
<div class="a" style="left:1502px;top:787px;width:14px;height:2px;background:#e0ae12;"></div>
<div class="a" style="left:1502px;top:799px;width:14px;height:2px;background:#e0ae12;"></div>
<div class="a" style="left:1502px;top:810px;width:14px;height:2px;background:#e0ae12;"></div>
<div class="a" style="left:1502px;top:820px;width:14px;height:2px;background:#e0ae12;"></div>
<div class="a" style="left:1502px;top:831px;width:14px;height:2px;background:#e0ae12;"></div>
<div class="a" style="left:1502px;top:842px;width:14px;height:2px;background:#e0ae12;"></div>
<div class="a" style="left:1502px;top:851px;width:14px;height:2px;background:#e0ae12;"></div>
<div class="a" style="left:1498px;top:295px;width:1.5px;height:10px;background:#8fd38f;"></div>
<div class="a" style="left:1516px;top:52px;width:20px;height:816px;background:#eeeeee;"></div>
<div class="a" style="left:1516px;top:52px;width:1px;height:816px;background:#c9c9c9;"></div>
<svg class="a" style="left:1521px;top:64px;" width="11" height="12" viewBox="0 0 11 12"><path d="M6.4 0 L10.4 0 L3.6 6.4 L1.6 4.6Z" fill="#41c4f6"/><path d="M6.2 5.6 H10.2 L6.4 9.4 L4.4 7.4Z" fill="#41c4f6"/><path d="M4.4 7.4 L6.4 9.4 L8.8 12 H4.8 L2.6 9.2Z" fill="#0f4fa0"/></svg>
<div class="t" style="left:1526.5px;top:121px;font-size:11.07px;color:#1e1e1e;transform:translate(-50%,-50%) rotate(90deg);">Flutter Inspector</div>
<svg class="a" style="left:1521px;top:184px;" width="11" height="12" viewBox="0 0 11 12"><path d="M6.4 0 L10.4 0 L3.6 6.4 L1.6 4.6Z" fill="#41c4f6"/><path d="M6.2 5.6 H10.2 L6.4 9.4 L4.4 7.4Z" fill="#41c4f6"/><path d="M4.4 7.4 L6.4 9.4 L8.8 12 H4.8 L2.6 9.2Z" fill="#0f4fa0"/></svg>
<div class="t" style="left:1526.5px;top:233.7px;font-size:10.59px;color:#1e1e1e;transform:translate(-50%,-50%) rotate(90deg);">Flutter Outline</div>
<svg class="a" style="left:1517.5px;top:291px;" width="17" height="16" viewBox="0 0 18 17"><path d="M1.5 15.5 C1.8 11.5 4.8 8.8 9 8.8 C13.2 8.8 16.2 11.5 16.5 15.5 Z" fill="#8fc026"/><circle cx="6" cy="12.6" r="0.9" fill="#fff"/><circle cx="12" cy="12.6" r="0.9" fill="#fff"/><path d="M3.3 4.8 C6.5 1.2 11.5 1.2 14.7 4.8" stroke="#8fc026" stroke-width="1.3" fill="none"/><path d="M5.8 6.8 C7.6 5 10.4 5 12.2 6.8" stroke="#8fc026" stroke-width="1.3" fill="none"/><circle cx="9" cy="7.4" r="1" fill="#8fc026"/><path d="M4.3 7.6 L5 9.2 M13.7 7.6 L13 9.2" stroke="#8fc026" stroke-width="1"/></svg>
<div class="t" style="left:1526.5px;top:353.5px;font-size:10.8px;color:#1e1e1e;transform:translate(-50%,-50%) rotate(90deg);">Android WiFi ADB</div>
<svg class="a" style="left:1521px;top:426px;" width="11" height="12" viewBox="0 0 11 12"><path d="M6.4 0 L10.4 0 L3.6 6.4 L1.6 4.6Z" fill="#41c4f6"/><path d="M6.2 5.6 H10.2 L6.4 9.4 L4.4 7.4Z" fill="#41c4f6"/><path d="M4.4 7.4 L6.4 9.4 L8.8 12 H4.8 L2.6 9.2Z" fill="#0f4fa0"/></svg>
<div class="t" style="left:1526.5px;top:489.4px;font-size:10.77px;color:#1e1e1e;transform:translate(-50%,-50%) rotate(90deg);">Flutter Performance</div>
<svg class="a" style="left:1519px;top:560px;" width="15" height="12" viewBox="0 0 15 12"><path d="M0.3 11.4 V6.6 L2.4 2.8 C4.5 2.0 7.5 2.0 9.6 2.6 L10.2 3.6 C11.2 4.4 12.8 4.2 13.4 3.2 C13.8 2.5 13.2 1.8 12.4 1.9 C11.8 2 11.4 2.4 11.1 2.0 C10.9 1.4 11.6 0.4 12.6 0.3 C14.0 0.2 14.9 1.4 14.6 3.0 C14.3 4.8 13.2 6.2 11.9 7.2 L10.4 9.0 V11.4 H8.6 L8.2 10.0 C7.4 10.2 7.0 10.2 6.4 10.0 V11.4 H4.4 L4.1 10.0 H2.5 L2.2 11.4 Z" fill="#5a5a5a"/><path d="M3.4 6.4 L4.6 7.0 L6.6 5.6" stroke="#eeeeee" stroke-width="0.8" fill="none" opacity="0.8"/><path d="M9.7 4.4 V6" stroke="#eeeeee" stroke-width="0.6" opacity="0.6"/></svg>
<div class="t" style="left:1526.5px;top:594px;font-size:10.73px;color:#1e1e1e;transform:translate(-50%,-50%) rotate(90deg);">Gradle</div>
<div class="a" style="left:18px;top:289px;width:270px;height:23px;border:3px solid #f45f5f"></div>
<div class="a" style="left:396.5px;top:413px;width:152px;height:21px;border:3px solid #f45f5f"></div>
<div class="a" style="left:1423px;top:79px;width:81px;height:28px;border:3px solid #f45f5f"></div>
<svg class="a" style="left:1370px;top:100px;" width="80" height="64" viewBox="0 0 80 64"><path d="M8.5 55.5 L62 17" stroke="#f45f5f" stroke-width="3" stroke-linecap="round"/><path d="M72.6 9 L49 20 L58.5 27.5Z" fill="#f45f5f"/></svg>
</body></html>
